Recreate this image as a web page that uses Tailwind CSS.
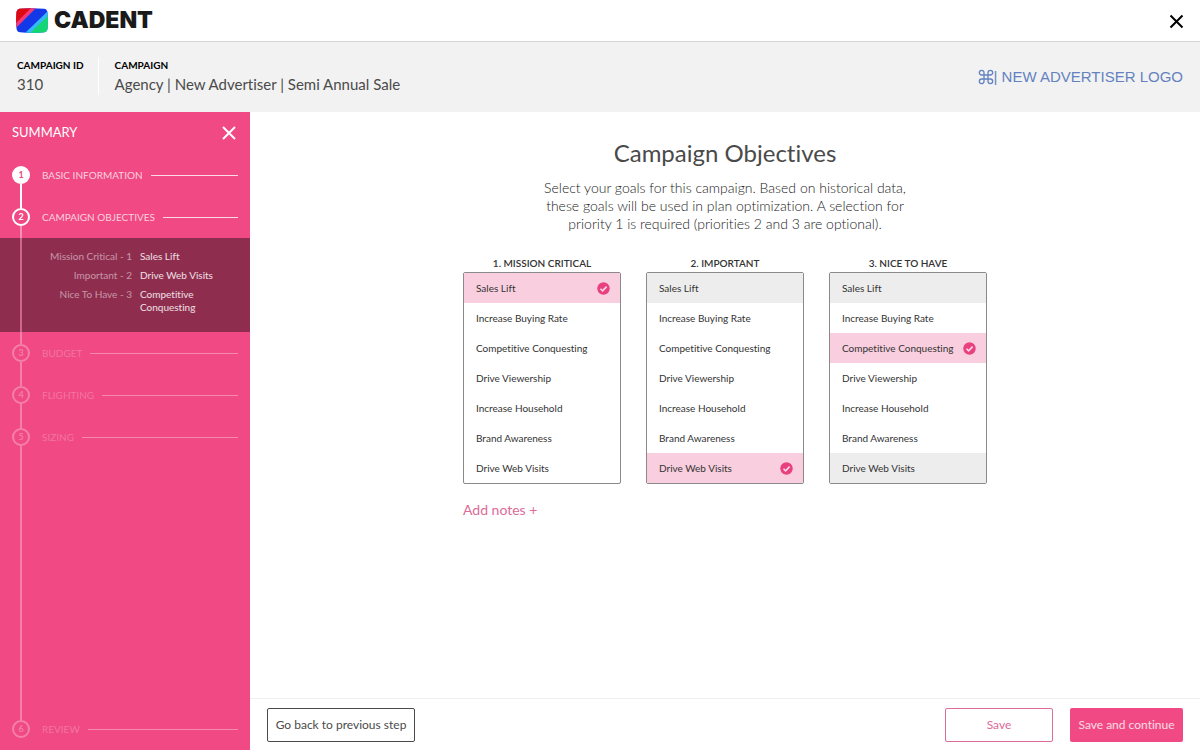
<!DOCTYPE html>
<html lang="en">
  <head>
    <meta charset="UTF-8" />
    <meta name="viewport" content="width=device-width, initial-scale=1.0" />
    <title>Cadent - Campaign Objectives</title>
    <script src="https://cdn.jsdelivr.net/npm/@tailwindcss/browser@4"></script>
  </head>
  <body
    class="flex min-h-screen flex-col bg-white font-['Lato',sans-serif] text-[#4a4a4a] [font-variant-ligatures:none]"
  >
    <!-- Top bar -->
    <header
      class="flex h-[42px] items-center justify-between border-b border-[#d4d4d4] px-4"
    >
      <a href="#" class="flex items-center gap-1.5 text-[#1a1a1a]">
        <svg class="h-[25px] w-8" viewBox="0 0 32 25" aria-hidden="true">
          <defs>
            <clipPath id="mark">
              <path d="M4 .8Q16-.5 28 .8Q31 1 31.400 4Q32.400 12.500 31.400 21Q31 24 28 24.200Q16 25.500 4 24.200Q1 24 .6 21Q-.4 12.500 .6 4Q1 1 4 .8Z" />
            </clipPath>
          </defs>
          <g clip-path="url(#mark)">
            <rect width="32" height="25" fill="#1238e8" />
            <path d="M0 0H20L0 20Z" fill="#f0387c" />
            <path d="M0 0H15L0 15Z" fill="#dd0a12" />
            <path d="M32 3V25H9Z" fill="#35b8f5" />
            <path d="M32 8V25H14Z" fill="#14d672" />
          </g>
        </svg>
        <span class="font-['Inter',sans-serif] text-[23px] font-black">CADENT</span>
      </a>
      <button type="button" aria-label="Close" class="pt-0.5 text-black">
        <svg class="size-[15px]" viewBox="0 0 15 15" fill="none" stroke="currentColor" stroke-width="2">
          <path d="M1.500 1.500 13.500 13.500M13.500 1.500 1.500 13.500" />
        </svg>
      </button>
    </header>

    <!-- Campaign info -->
    <section
      class="flex h-[70px] items-center justify-between bg-[#f2f2f2] px-[17px]"
    >
      <dl class="flex pb-0.5">
        <div class="border-r border-white pr-3.5">
          <dt class="text-[10px] leading-4 font-bold text-black">CAMPAIGN ID</dt>
          <dd class="text-[15px] leading-[22px]">310</dd>
        </div>
        <div class="pl-4">
          <dt class="text-[10px] leading-4 font-bold text-black">CAMPAIGN</dt>
          <dd class="text-[15px] leading-[22px]">
            Agency | New Advertiser | Semi Annual Sale
          </dd>
        </div>
      </dl>
      <p
        class="flex items-center font-['Liberation_Sans',sans-serif] text-[15px] text-[#6482c0]"
      >
        <svg class="size-4" viewBox="0 0 24 24" fill="none" stroke="currentColor" stroke-width="2" aria-hidden="true">
          <path d="M9 9h6v6H9ZM9 9V5.500a3.500 3.500 0 1 0-3.500 3.500ZM15 9h3.500a3.500 3.500 0 1 0-3.500-3.500ZM15 15v3.500a3.500 3.500 0 1 0 3.500-3.500ZM9 15H5.500a3.500 3.500 0 1 0 3.500 3.500Z" />
        </svg>
        <span>| NEW ADVERTISER LOGO</span>
      </p>
    </section>

    <div class="flex flex-1">
      <!-- Summary sidebar -->
      <aside class="flex w-[250px] shrink-0 flex-col bg-[#f04983] text-white">
        <div class="flex h-[42px] items-center justify-between px-3">
          <h2 class="text-[13px]">SUMMARY</h2>
          <button type="button" aria-label="Close summary" class="p-0.5">
            <svg class="size-[14px]" viewBox="0 0 14 14" fill="none" stroke="currentColor" stroke-width="2">
              <path d="M1 1 13 13M13 1 1 13" />
            </svg>
          </button>
        </div>
        <ol class="flex flex-1 flex-col text-[10px]">
          <li class="flex h-[42px] items-center gap-2 px-3">
            <div class="flex h-full w-[18px] flex-col items-center">
              <span class="w-0.5 flex-1"></span>
              <span class="flex size-[18px] items-center justify-center rounded-full bg-white text-[9px] font-bold text-[#f04983]">1</span>
              <span class="w-0.5 flex-1 bg-white"></span>
            </div>
            <a href="#" class="ml-1 text-white/75">BASIC INFORMATION</a>
            <span class="h-px flex-1 bg-white/80"></span>
          </li>
          <li>
            <div class="flex h-[42px] items-center gap-2 px-3">
              <div class="flex h-full w-[18px] flex-col items-center">
                <span class="w-0.5 flex-1 bg-white"></span>
                <span class="flex size-[18px] items-center justify-center rounded-full border-2 border-white text-[9px] font-bold">2</span>
                <span class="w-0.5 flex-1 bg-white/40"></span>
              </div>
              <a href="#" class="ml-1 text-white/75">CAMPAIGN OBJECTIVES</a>
              <span class="h-px flex-1 bg-white/80"></span>
            </div>
            <div class="flex h-[94px] bg-[#8f2d4f] px-3">
              <div class="flex w-[18px] justify-center">
                <span class="w-0.5 bg-[#d0658d]"></span>
              </div>
              <dl
                class="grid flex-1 grid-cols-[102px_80px] content-start gap-x-2 gap-y-[6px] pt-3 leading-[13px]"
              >
                <dt class="text-right text-white/50">Mission Critical - 1</dt>
                <dd class="text-white/85">Sales Lift</dd>
                <dt class="text-right text-white/50">Important - 2</dt>
                <dd class="text-white/85">Drive Web Visits</dd>
                <dt class="text-right text-white/50">Nice To Have - 3</dt>
                <dd class="text-white/85">Competitive Conquesting</dd>
              </dl>
            </div>
          </li>
          <li class="flex h-[42px] items-center gap-2 px-3">
            <div class="flex h-full w-[18px] flex-col items-center">
              <span class="w-0.5 flex-1 bg-white/30"></span>
              <span class="flex size-[18px] items-center justify-center rounded-full border-2 border-white/30 text-[9px] font-bold text-white/30">3</span>
              <span class="w-0.5 flex-1 bg-white/30"></span>
            </div>
            <a href="#" class="ml-1 text-white/25">BUDGET</a>
            <span class="h-px flex-1 bg-white/35"></span>
          </li>
          <li class="flex h-[42px] items-center gap-2 px-3">
            <div class="flex h-full w-[18px] flex-col items-center">
              <span class="w-0.5 flex-1 bg-white/30"></span>
              <span class="flex size-[18px] items-center justify-center rounded-full border-2 border-white/30 text-[9px] font-bold text-white/30">4</span>
              <span class="w-0.5 flex-1 bg-white/30"></span>
            </div>
            <a href="#" class="ml-1 text-white/25">FLIGHTING</a>
            <span class="h-px flex-1 bg-white/35"></span>
          </li>
          <li class="flex flex-1 flex-col">
            <div class="flex h-[42px] items-center gap-2 px-3">
              <div class="flex h-full w-[18px] flex-col items-center">
                <span class="w-0.5 flex-1 bg-white/30"></span>
                <span class="flex size-[18px] items-center justify-center rounded-full border-2 border-white/30 text-[9px] font-bold text-white/30">5</span>
                <span class="w-0.5 flex-1 bg-white/30"></span>
              </div>
              <a href="#" class="ml-1 text-white/25">SIZING</a>
              <span class="h-px flex-1 bg-white/35"></span>
            </div>
            <div class="flex flex-1 px-3">
              <div class="flex w-[18px] justify-center">
                <span class="w-0.5 bg-white/30"></span>
              </div>
            </div>
          </li>
          <li class="flex h-[42px] items-center gap-2 px-3">
            <div class="flex h-full w-[18px] flex-col items-center">
              <span class="w-0.5 flex-1 bg-white/30"></span>
              <span class="flex size-[18px] items-center justify-center rounded-full border-2 border-white/30 text-[9px] font-bold text-white/30">6</span>
              <span class="w-0.5 flex-1"></span>
            </div>
            <a href="#" class="ml-1 text-white/25">REVIEW</a>
            <span class="h-px flex-1 bg-white/35"></span>
          </li>
        </ol>
      </aside>

      <!-- Objectives form -->
      <form class="flex flex-1 flex-col">
        <main class="flex flex-1 flex-col items-center pt-[25px]">
          <h1 class="text-2xl leading-8">Campaign Objectives</h1>
          <p class="mt-2.5 w-[380px] text-center text-sm leading-[18px] font-light text-[#222]">
            Select your goals for this campaign. Based on historical data,<br />
            these goals will be used in plan optimization. A selection for<br />
            priority 1 is required (priorities 2 and 3 are optional).
          </p>
          <div>
            <div id="priorities" class="mt-[21px] flex gap-[25px]"></div>
            <button type="button" class="mt-4 text-sm text-[#dc6c98]">
              Add notes +
            </button>
          </div>
        </main>
        <footer
          class="flex h-[52px] items-center justify-between border-t border-[#f0f0f0] px-[17px] text-xs"
        >
          <button
            type="button"
            class="h-[34px] w-[148px] rounded-xs border border-[#4a4a4a]"
          >
            Go back to previous step
          </button>
          <div class="flex gap-[17px]">
            <button
              type="button"
              class="h-[34px] w-[108px] rounded-xs border border-[#dc6c98] text-[#dc6c98]"
            >
              Save
            </button>
            <button
              type="submit"
              class="h-[34px] w-[113px] rounded-xs bg-[#f04983] text-white/80"
            >
              Save and continue
            </button>
          </div>
        </footer>
      </form>
    </div>

    <script>
      const goals = [
        "Sales Lift",
        "Increase Buying Rate",
        "Competitive Conquesting",
        "Drive Viewership",
        "Increase Household",
        "Brand Awareness",
        "Drive Web Visits",
      ];
      const priorities = [
        { title: "1. MISSION CRITICAL", selected: 0, disabled: [] },
        { title: "2. IMPORTANT", selected: 6, disabled: [0] },
        { title: "3. NICE TO HAVE", selected: 2, disabled: [0, 6] },
      ];

      document.getElementById("priorities").innerHTML = priorities
        .map(
          (priority, p) => `
          <fieldset class="w-[158px]">
            <legend class="w-full text-center text-[10px] leading-[18px] font-semibold text-[#333]">${priority.title}</legend>
            <div class="rounded-xs border border-[#8a8a8a] text-[10px] text-[#333]">
              ${goals
                .map(
                  (goal, g) => `
                <label class="relative flex h-[30px] items-center justify-between pr-2.5 pl-3 has-checked:bg-[#f9cfdf] has-disabled:bg-[#ededed]">
                  <input type="radio" name="priority${p + 1}" value="${goal}" class="peer sr-only"
                    ${priority.selected === g ? "checked" : ""} ${priority.disabled.includes(g) ? "disabled" : ""} />
                  <span>${goal}</span>
                  <svg class="hidden size-[13px] peer-checked:block" viewBox="0 0 13 13" fill="none" aria-hidden="true">
                    <circle cx="6.5" cy="6.5" r="6.25" fill="#e9417f" />
                    <path d="M3.5 6.700 5.600 8.800 9.600 4.600" stroke="#fbd9e6" stroke-width="1.600" />
                  </svg>
                </label>`
                )
                .join("")}
            </div>
          </fieldset>`
        )
        .join("");
    </script>
  </body>
</html>
